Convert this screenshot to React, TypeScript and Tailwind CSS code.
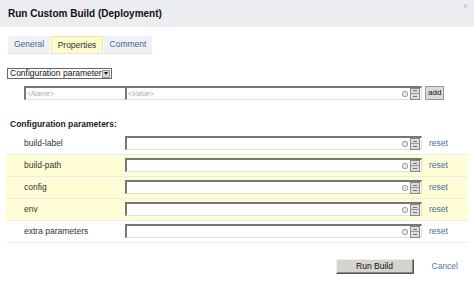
import React from 'react';

const font = { fontFamily: '"Liberation Sans", Arial, sans-serif' };

const params = [
	{ name: 'build-label', hl: false },
	{ name: 'build-path', hl: true },
	{ name: 'config', hl: true },
	{ name: 'env', hl: true },
	{ name: 'extra parameters', hl: false },
];

// little "choose value" + spin control at the right side of every field
function FieldTools() {
	return (
		<div className="flex items-center gap-[2px] pr-[1px]">
			<div className="w-[6px] h-[6px] rounded-[2px] border border-[#a9a9a9] bg-[#e4e4e4]" />
			<div className="flex flex-col w-[10px] h-[12px] border border-[#8a8a8a] bg-[#dcdcdc]">
				<div className="flex-1 border-b border-[#9a9a9a] flex items-center justify-center">
					<div className="w-[4px] h-px bg-[#777]" />
				</div>
				<div className="flex-1 flex items-center justify-center">
					<div className="w-[4px] h-px bg-[#777]" />
				</div>
			</div>
		</div>
	);
}

function Field({ width, placeholder }: { width: string; placeholder?: string }) {
	return (
		<div
			className={`${width} h-[14px] flex items-center justify-between bg-white border-t-2 border-l-2 border-[#777] border-b border-b-[#dedede] border-r border-r-[#dedede]`}>
			<span className="pl-[1px] text-[7px] text-[#aaa] italic leading-none">{placeholder}</span>
			<FieldTools />
		</div>
	);
}

export default function App() {
	return (
		<div className="w-[474px] h-[284px] bg-white overflow-hidden text-[#333]" style={font}>
			{/* header */}
			<div className="h-[27px] bg-[#ebedf0] flex items-center justify-between pl-2 pr-[6px]">
				<span className="text-[10px] font-bold text-[#111]">Run Custom Build (Deployment)</span>
				<span className="text-[9px] text-[#bbb] -mt-[13px]">×</span>
			</div>

			{/* tabs */}
			<div className="mt-[9px] ml-2 w-[145px] flex gap-px border-b border-[#e2e4e8] text-[8.5px]">
				<div className="w-[42px] h-[17px] flex items-center justify-center bg-[#eef1f5] text-[#4a6788]">General</div>
				<div className="w-[52px] h-[17px] flex items-center justify-center bg-[#fdfcc8] border border-[#e8e7b8] border-b-0 text-[#333]">
					Properties
				</div>
				<div className="w-[48px] h-[17px] flex items-center justify-center bg-[#eef1f5] text-[#4a6788]">Comment</div>
			</div>

			{/* type select */}
			<div className="mt-[14px] ml-[7px] w-[105px] h-[11px] flex items-center justify-between border border-[#666] bg-white text-[8.5px] text-[#111]">
				<span className="pl-[2px] leading-none">Configuration parameter</span>
				<div className="w-[8px] h-[8px] mr-px bg-[#d8d8d8] border border-[#999] flex items-center justify-center">
					<div className="w-0 h-0 border-l-[2.5px] border-r-[2.5px] border-t-[3px] border-l-transparent border-r-transparent border-t-[#111]" />
				</div>
			</div>

			{/* name / value row */}
			<div className="mt-[7px] ml-[24px] flex items-center">
				<div className="w-[101px] h-[14px] flex items-center bg-white border-t-2 border-l-2 border-[#777] border-b border-b-[#dedede]">
					<span className="pl-[1px] text-[7px] text-[#aaa] italic leading-none">&lt;Name&gt;</span>
				</div>
				<Field width="w-[297px]" placeholder="<Value>" />
				<button className="ml-[3px] h-[14px] px-[2px] bg-[#dcdad4] border border-[#999] text-[8px] leading-none text-[#111]">
					add
				</button>
			</div>

			<div className="mt-[18px] ml-[10px] text-[8.5px] font-bold text-[#222]">Configuration parameters:</div>

			{/* parameter rows */}
			<div className="mt-[2px] ml-[6px] w-[462px]">
				{params.map((p) => (
					<div
						key={p.name}
						className={`h-[22px] flex items-center border-b border-[#ececec] text-[8.5px] ${
							p.hl ? 'bg-[#fefdd6]' : 'bg-white'
						}`}>
						<span className="w-[119px] pl-[18px] text-[#333]">{p.name}</span>
						<Field width="w-[297px]" />
						<span className="ml-[7px] text-[#3f6f9f]">reset</span>
					</div>
				))}
			</div>

			{/* footer */}
			<div className="mt-[16px] flex items-center justify-end pr-[16px] text-[8.5px]">
				<button className="w-[78px] h-[15px] bg-[#d6d3ce] border border-[#eee] border-r-[#555] border-b-[#555] shadow-[inset_-1px_-1px_0_#888] text-[#111] leading-none">
					Run Build
				</button>
				<span className="ml-[18px] text-[#4f79a6]">Cancel</span>
			</div>
		</div>
	);
}
